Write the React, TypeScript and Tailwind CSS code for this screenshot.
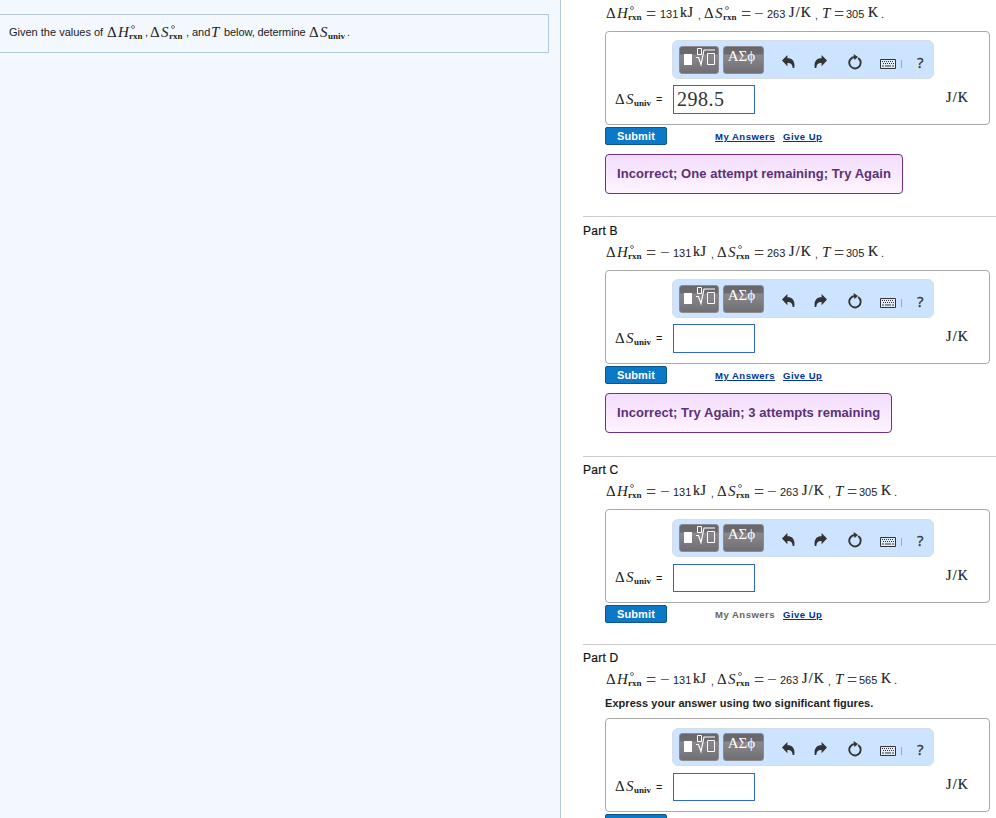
import React from 'react';

interface PartProps {
  title?: string;
  dH: string;
  dS: string;
  temp: string;
  hint?: string;
  answer?: string;
  feedback?: string;
  answersDisabled?: boolean;
}

const serif = "font-['Liberation_Serif',serif]";

const DeltaSym: React.FC<{ letter: string; sub: string; circ?: boolean }> = ({ letter, sub, circ }) => (
  <span className={`${serif} inline-flex text-[15px] leading-[18px] text-[#222]`}>
    <span className="w-[11px]">Δ</span>
    <span className={`italic ${letter === 'H' ? 'w-[11px]' : 'w-[8px]'}`}>{letter}</span>
    <span className="relative h-[18px] text-[9px] font-bold leading-[10px]">
      {circ && <span className="absolute left-[2px] top-[2px] h-[4px] w-[4px] rounded-full border border-[#777]" />}
      <span className="inline-block pt-[8px]">{sub}</span>
    </span>
  </span>
);

const Num: React.FC<{ value: string; width?: string }> = ({ value, width = 'w-[21px]' }) => (
  <>
    {value.startsWith('-') && <span className={`${serif} w-[13px] pt-[1px] text-[17px] text-[#444]`}>−</span>}
    <span className={`${width} pt-[1px] text-[11px]`}>{value.replace('-', '')}</span>
  </>
);

const Unit: React.FC<{ children: string; className?: string }> = ({ children, className = '' }) => (
  <span className={`${serif} text-[14px] [-webkit-text-stroke:0.2px_#222] ${children === 'J/K' ? 'tracking-[1.2px]' : 'tracking-[0.4px]'} ${className}`}>{children}</span>
);

const Equation: React.FC<Pick<PartProps, 'dH' | 'dS' | 'temp'>> = ({ dH, dS, temp }) => (
  <div className="flex h-[18px] whitespace-nowrap pl-[1px] leading-[18px] text-[#222]">
    <span className="w-[40px]"><DeltaSym letter="H" sub="rxn" circ /></span>
    <span className={`${serif} w-[14px] pt-[1px] text-[18px] text-[#444]`}>=</span>
    <Num value={dH} width="w-[20px]" />
    <Unit className="w-[17px]">kJ</Unit>
    <span className="w-[7px] pl-[1px] pt-[3px] text-[10px]">,</span>
    <span className="w-[37px]"><DeltaSym letter="S" sub="rxn" circ /></span>
    <span className={`${serif} w-[13px] pt-[1px] text-[18px] text-[#444]`}>=</span>
    <Num value={dS} />
    <Unit className="w-[27px] pl-[1px]">J/K</Unit>
    <span className="w-[7px] pt-[3px] text-[10px]">,</span>
    <span className={`${serif} w-[12px] text-[15px] italic`}>T</span>
    <span className={`${serif} w-[12px] pt-[1px] text-[18px] text-[#444]`}>=</span>
    <Num value={temp} />
    <Unit className="w-[14px] pl-[1px]">K</Unit>
    <span className="pt-[1px] text-[11px]">.</span>
  </div>
);

const arrowPath = 'M0 5 5 0v3C9.5 2.8 12.3 6 11.3 12H9.8C9.8 9 8.5 7.3 5 7.3v3Z';
const toolCls = 'h-[28px] rounded-[3px] border border-[#8d8b90] bg-[linear-gradient(180deg,#68666a_0%,#6d6b6f_28%,#8b898e_30%,#706e72_100%)] text-white';

const Toolbar: React.FC<{ size: string }> = ({ size }) => (
  <div className={`${size} flex w-[262px] rounded-[6px] border border-[#d7dde4] bg-[#cce4ff] pl-[6px] text-[#333]`}>
    <button className={`${toolCls} w-[40px]`} aria-label="Templates">
      <svg width="38" height="26" viewBox="0 0 38 26" fill="none" stroke="white">
        <path d="M4 7h8v11H4z" fill="white" stroke="none" />
        <path d="M16 10.5h2.5l2.5 7 3-14.5h11" strokeWidth="1.2" />
        <path d="M17.5 1.5h4v6h-4zM27.5 6.5h7v11h-7z" />
      </svg>
    </button>
    <button className={`${toolCls} ${serif} ml-[4px] w-[41px] pb-[8px] pr-[4px] text-[15px] leading-[18px]`}>ΑΣϕ</button>
    <div className="flex grow pt-[9px]">
      <svg className="ml-[18px]" width="13" height="13" viewBox="0 0 12 12" fill="#333"><path d={arrowPath} /></svg>
      <svg className="ml-[19px] -scale-x-100" width="13" height="13" viewBox="0 0 12 12" fill="#333"><path d={arrowPath} /></svg>
      <svg className="ml-[21px] -mt-[1px]" width="15" height="16" viewBox="0 0 15 16" fill="none" stroke="#333" strokeWidth="1.9">
        <path d="M10.2 4A5.7 5.7 0 1 1 7 3" />
        <path d="M5.5 0 10 3 6.5 6Z" fill="#333" stroke="none" />
      </svg>
      <svg className="ml-[17px] mt-[4px]" width="16" height="10" viewBox="0 0 16 10" fill="none" stroke="#333">
        <path d="M.5.5h15v9H.5z" fill="#e2eefb" />
        <path d="M2 2.5h12M3 4.5h11" strokeDasharray="1 1" />
        <path d="M2 7h2M5 7h6M12 7h2" />
      </svg>
      <span className="ml-[5px] mt-[5px] h-[8px] w-px bg-[#9aaabd]" />
      <span className="ml-[15px] -mt-[3px] font-['Open_Sans',sans-serif] text-[15px] leading-[20px] [-webkit-text-stroke:0.3px_#333]">?</span>
    </div>
  </div>
);

const Part: React.FC<PartProps> = ({ title, dH, dS, temp, hint, answer, feedback, answersDisabled }) => {
  // parts without a feedback message have a slightly lower, shorter toolbar
  const plain = !feedback;
  return (
    <section className={`ml-[22px] ${title ? 'border-t border-[#ccc]' : ''}`}>
      {title && <h2 className={`text-[12px] leading-[16px] tracking-[0.25px] text-[#111] [-webkit-text-stroke:0.2px_#111] ${plain ? 'h-[25px] pt-[5px]' : 'h-[26px] pt-[6px]'}`}>{title}</h2>}
      <div className="pl-[22px]">
        <div className={title ? '' : 'pt-[4px]'}><Equation dH={dH} dS={dS} temp={temp} /></div>
        {hint && <p className="mt-[8px] h-[15px] text-[11px] font-bold leading-[15px] tracking-[0.05px] text-[#222]">{hint}</p>}
        <div className={`h-[94px] w-[385px] rounded-[4px] border border-[#a9a9a9] ${hint ? 'mt-[7px]' : 'mt-[9px]'} ${plain ? 'pt-[9px]' : 'pt-[8px]'}`}>
          <div className="pl-[66px]"><Toolbar size={plain ? 'h-[38px] pt-[4px]' : 'h-[39px] pt-[5px]'} /></div>
          <div className={`flex pl-[9px] ${plain ? 'mt-[7px] h-[28px]' : 'mt-[6px] h-[29px]'}`}>
            <span className={`w-[40px] ${plain ? 'pt-[1px]' : 'pt-[2px]'}`}><DeltaSym letter="S" sub="univ" /></span>
            <span className="w-[18px] pl-[1px] pt-[5px] text-[11px] leading-[18px] text-[#222]">=</span>
            <input defaultValue={answer} className={`${serif} h-full w-[82px] border border-[#3366cc] bg-white pl-[3px] text-[20px] tracking-[0.5px] text-[#333] outline-none`} />
            <span className={`ml-[191px] leading-[18px] text-[#222] ${plain ? 'pt-[2px]' : 'pt-[3px]'}`}><Unit>J/K</Unit></span>
          </div>
        </div>
        <div className="mt-[2px] flex h-[18px] items-center text-[9.5px] font-bold leading-[12px] tracking-[0.5px]">
          <button className="h-[18px] w-[62px] rounded-[2px] border border-[#0b5591] bg-[#0b78c8] text-[11px] leading-[16px] tracking-[0.1px] text-white">Submit</button>
          <a className={`ml-[48px] mt-[2px] w-[68px] whitespace-nowrap ${answersDisabled ? 'text-[#666]' : 'text-[#003399] underline'}`}>My Answers</a>
          <a className="mt-[2px] text-[#003399] underline">Give Up</a>
        </div>
        {feedback && (
          <div className="mt-[9px] h-[40px] w-fit whitespace-nowrap rounded-[4px] border border-[#70308a] bg-linear-to-b from-[#f3dcfd] to-[#fef4ff] px-[11px] text-[13px] font-bold leading-[37px] tracking-[0.05px] text-[#5a3275]">
            {feedback}
          </div>
        )}
      </div>
      <div className={feedback ? (title ? 'h-[23px]' : 'h-[22px]') : 'h-[21px]'} />
    </section>
  );
};

const parts: PartProps[] = [
  { dH: '131', dS: '-263', temp: '305', answer: '298.5', feedback: 'Incorrect; One attempt remaining; Try Again' },
  { title: 'Part B', dH: '-131', dS: '263', temp: '305', feedback: 'Incorrect; Try Again; 3 attempts remaining' },
  { title: 'Part C', dH: '-131', dS: '-263', temp: '305', answersDisabled: true },
  { title: 'Part D', dH: '-131', dS: '-263', temp: '565', hint: 'Express your answer using two significant figures.' },
];

export default function App() {
  return (
    <div className="flex h-[818px] w-[996px] overflow-hidden bg-white font-['Liberation_Sans',sans-serif]">
      <aside className="h-full w-[561px] shrink-0 border-r border-[#b4c9dc] bg-[#f3f8ff] pt-[14px]">
        <div className="flex h-[39px] w-[549px] whitespace-nowrap border border-l-0 border-[#b4c9dc] pl-[9px] pt-[8px] text-[11px] leading-[18px] text-[#222]">
          <span className="w-[98px]">Given the values of</span>
          <span className="w-[38px]"><DeltaSym letter="H" sub="rxn" circ /></span>
          <span className="w-[5px]">,</span>
          <span className="w-[36px]"><DeltaSym letter="S" sub="rxn" circ /></span>
          <span className="w-[6px]">,</span>
          <span className="w-[19px]">and</span>
          <span className={`${serif} w-[13px] text-[15px] italic`}>T</span>
          <span className="w-[85px] tracking-[-0.1px]">below, determine</span>
          <span className="w-[38px]"><DeltaSym letter="S" sub="univ" /></span>
          <span>.</span>
        </div>
      </aside>
      <main className="min-w-0 grow">
        {parts.map((p, i) => <Part key={i} {...p} />)}
      </main>
    </div>
  );
}
